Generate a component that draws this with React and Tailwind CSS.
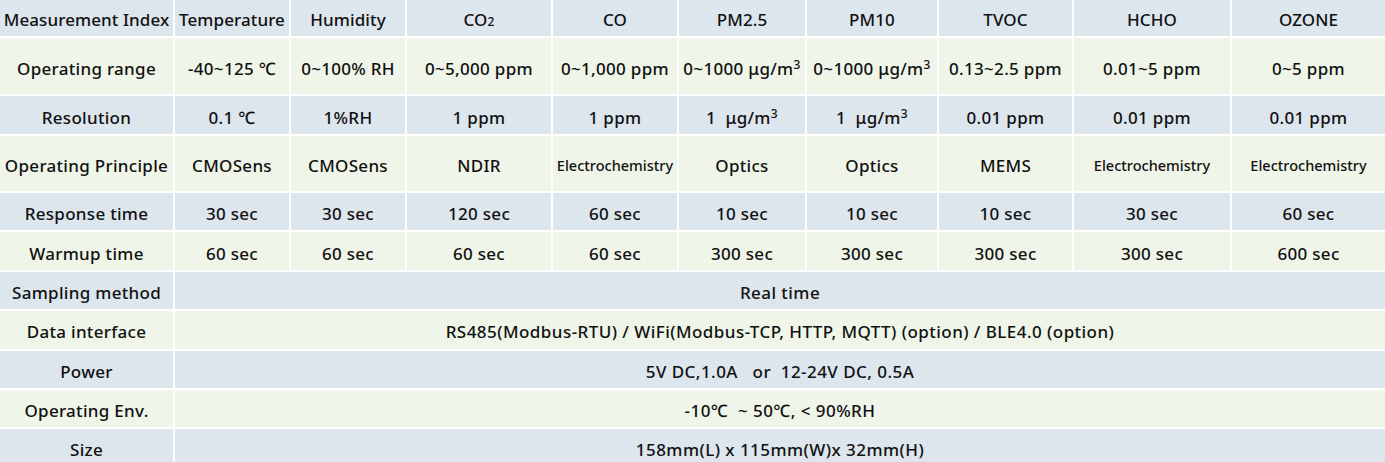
import React from "react";

const cols = ["Measurement Index","Temperature","Humidity","CO2","CO","PM2.5","PM10","TVOC","HCHO","OZONE"];
const ug = (pre) => (<span>{pre}μg/m<sup className="text-[12px]">3</sup></span>);

const rows = [
  { h: "h-[56px]", bg: "bg-[#eff5e8]", cells: ["Operating range","-40~125 ℃","0~100% RH","0~5,000 ppm","0~1,000 ppm", ug("0~1000 "), ug("0~1000 "),"0.13~2.5 ppm","0.01~5 ppm","0~5 ppm"] },
  { h: "h-[38px]", bg: "bg-[#dde5ed]", cells: ["Resolution","0.1 ℃","1%RH","1 ppm","1 ppm", ug("1  "), ug("1  "),"0.01 ppm","0.01 ppm","0.01 ppm"] },
  { h: "h-[55px]", bg: "bg-[#eff5e8]", cells: ["Operating Principle","CMOSens","CMOSens","NDIR",{small:"Electrochemistry"},"Optics","Optics","MEMS",{small:"Electrochemistry"},{small:"Electrochemistry"}] },
  { h: "h-[37px]", bg: "bg-[#dde5ed]", cells: ["Response time","30 sec","30 sec","120 sec","60 sec","10 sec","10 sec","10 sec","30 sec","60 sec"] },
  { h: "h-[38px]", bg: "bg-[#eff5e8]", cells: ["Warmup time","60 sec","60 sec","60 sec","60 sec","300 sec","300 sec","300 sec","300 sec","600 sec"] },
];

const spans = [
  { h: "h-[37px]", bg: "bg-[#dde5ed]", label: "Sampling method", value: "Real time" },
  { h: "h-[38px]", bg: "bg-[#eff5e8]", label: "Data interface", value: "RS485(Modbus-RTU) / WiFi(Modbus-TCP, HTTP, MQTT) (option) / BLE4.0 (option)" },
  { h: "h-[37px]", bg: "bg-[#dde5ed]", label: "Power", value: "5V DC,1.0A\u00a0\u00a0 or\u00a0 12-24V DC, 0.5A" },
  { h: "h-[37px]", bg: "bg-[#eff5e8]", label: "Operating Env.", value: "-10℃\u00a0 ~ 50℃, < 90%RH" },
  { h: "h-[37px]", bg: "bg-[#dde5ed]", label: "Size", value: "158mm(L) x 115mm(W)x 32mm(H)" },
];

function Cell({ c, bg, h }) {
  let content = c;
  let cls = "text-[17px] tracking-[0.3px]";
  if (c && typeof c === "object" && c.small) { content = c.small; cls = "text-[14.5px]"; }
  return (
    <div className={`${bg} ${h} pt-[5px] flex items-center justify-center whitespace-pre ${cls}`}>{content}</div>
  );
}

export default function App() {
  return (
    <div className="w-[1385px] h-[462px] overflow-hidden bg-white text-[#111] font-['Noto_Sans',sans-serif] font-medium">
      <div className="grid grid-cols-[173px_114px_114px_144px_124px_126px_130px_133px_156px_153px] gap-[2px]">
        {cols.map((c, i) => (
          <div key={i} className="bg-[#dde5ed] h-[36px] pt-[4px] flex items-center justify-center text-[17px] tracking-[0.1px] whitespace-pre">
            {c === "CO2" ? <span>CO<span className="text-[12px]">2</span></span> : c}
          </div>
        ))}
        {rows.map((r, ri) => r.cells.map((c, ci) => (
          <Cell key={ri + "-" + ci} c={c} bg={r.bg} h={r.h} />
        )))}
        {spans.map((s, si) => (
          <React.Fragment key={si}>
            <div className={`${s.bg} ${s.h} pt-[4px] flex items-center justify-center text-[17px] tracking-[0.3px]`}>{s.label}</div>
            <div className={`${s.bg} ${s.h} pt-[4px] col-span-9 flex items-center justify-center text-[17px] tracking-[0.45px] whitespace-pre`}>{s.value}</div>
          </React.Fragment>
        ))}
      </div>
    </div>
  );
}
